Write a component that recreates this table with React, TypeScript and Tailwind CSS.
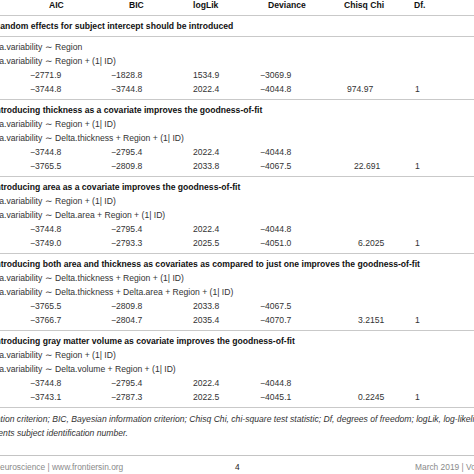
import React from "react";

const cols = "grid grid-cols-[30px_81px_82px_67px_86px_40px_1fr]";

type Num = { aic: string; bic: string; ll: string; dev: string; chi?: string; chiPad?: string; df?: string };
type Block = { title: string; titleMl: string; m1: string; m2: string; r1: Num; r2: Num };

const blocks: Block[] = [
  {
    title: "Introducing thickness as a covariate improves the goodness-of-fit",
    titleMl: "ml-[-7px]",
    m1: "Delta.variability ∼ Region + (1| ID)",
    m2: "Delta.variability ∼ Delta.thickness + Region + (1| ID)",
    r1: { aic: "−3744.8", bic: "−2795.4", ll: "2022.4", dev: "−4044.8" },
    r2: { aic: "−3765.5", bic: "−2809.8", ll: "2033.8", dev: "−4067.5", chi: "22.691", chiPad: "pl-[8px]", df: "1" },
  },
  {
    title: "Introducing area as a covariate improves the goodness-of-fit",
    titleMl: "ml-[-7px]",
    m1: "Delta.variability ∼ Region + (1| ID)",
    m2: "Delta.variability ∼ Delta.area + Region + (1| ID)",
    r1: { aic: "−3744.8", bic: "−2795.4", ll: "2022.4", dev: "−4044.8" },
    r2: { aic: "−3749.0", bic: "−2793.3", ll: "2025.5", dev: "−4051.0", chi: "6.2025", chiPad: "pl-[12px]", df: "1" },
  },
  {
    title: "Introducing both area and thickness as covariates as compared to just one improves the goodness-of-fit",
    titleMl: "ml-[-7px]",
    m1: "Delta.variability ∼ Delta.thickness + Region + (1| ID)",
    m2: "Delta.variability ∼ Delta.thickness + Delta.area + Region + (1| ID)",
    r1: { aic: "−3765.5", bic: "−2809.8", ll: "2033.8", dev: "−4067.5" },
    r2: { aic: "−3766.7", bic: "−2804.7", ll: "2035.4", dev: "−4070.7", chi: "3.2151", chiPad: "pl-[12px]", df: "1" },
  },
  {
    title: "Introducing gray matter volume as covariate improves the goodness-of-fit",
    titleMl: "ml-[-7px]",
    m1: "Delta.variability ∼ Region + (1| ID)",
    m2: "Delta.variability ∼ Delta.volume + Region + (1| ID)",
    r1: { aic: "−3744.8", bic: "−2795.4", ll: "2022.4", dev: "−4044.8" },
    r2: { aic: "−3743.1", bic: "−2787.3", ll: "2022.5", dev: "−4045.1", chi: "0.2245", chiPad: "pl-[12px]", df: "1" },
  },
];

function NumRow({ n }: { n: Num }) {
  return (
    <div className={`${cols} h-[14px] leading-[14px] whitespace-nowrap text-[#333]`}>
      <span />
      <span>{n.aic}</span>
      <span>{n.bic}</span>
      <span>{n.ll}</span>
      <span>{n.dev}</span>
      <span className={n.chiPad ?? ""}>{n.chi ?? ""}</span>
      <span className="pl-[29px]">{n.df ?? ""}</span>
    </div>
  );
}

function ModelRow({ text }: { text: string }) {
  return (
    <div className="h-[14px] leading-[14px] whitespace-nowrap text-[#333]">
      <span className="ml-[-16px]">{text}</span>
    </div>
  );
}

export default function App() {
  return (
    <div
      className="w-[474px] h-[474px] overflow-hidden bg-white text-[8.6px] text-[#222]"
      style={{ fontFamily: '"Liberation Sans", Arial, sans-serif' }}
    >
      {/* header */}
      <div className={`${cols} h-[16px] leading-[10px] font-bold text-[#111] border-b border-[#c9c9c9] whitespace-nowrap`}>
        <span />
        <span className="pl-[19px]">AIC</span>
        <span className="pl-[18px]">BIC</span>
        <span>logLik</span>
        <span className="pl-[8px]">Deviance</span>
        <span className="ml-[-2px]">Chisq Chi</span>
        <span className="pl-[28px]">Df.</span>
      </div>

      {/* first block */}
      <div className="h-[21px] leading-[20px] font-bold text-[#111] border-b border-[#c9c9c9] whitespace-nowrap">
        <span className="ml-[-6px]">Random effects for subject intercept should be introduced</span>
      </div>
      <div className="pt-[3px] pb-[3px] border-b border-[#c9c9c9]">
        <ModelRow text="Delta.variability ∼ Region" />
        <ModelRow text="Delta.variability ∼ Region + (1| ID)" />
        <NumRow n={{ aic: "−2771.9", bic: "−1828.8", ll: "1534.9", dev: "−3069.9" }} />
        <NumRow n={{ aic: "−3744.8", bic: "−3744.8", ll: "2022.4", dev: "−4044.8", chi: "974.97", chiPad: "pl-[1px]", df: "1" }} />
      </div>

      {blocks.map((b, i) => (
        <div key={i} className="pt-[3px] pb-[3px] border-b border-[#c9c9c9]">
          <div className="h-[14px] leading-[14px] font-bold text-[#111] whitespace-nowrap">
            <span className={b.titleMl}>{b.title}</span>
          </div>
          <ModelRow text={b.m1} />
          <ModelRow text={b.m2} />
          <NumRow n={b.r1} />
          <NumRow n={b.r2} />
        </div>
      ))}

      {/* footnote */}
      <div className="pt-[4px] italic text-[#333] whitespace-nowrap">
        <div className="h-[14px] leading-[14px]">
          <span className="ml-[-75px]">
            AIC, Akaike information criterion; BIC, Bayesian information criterion; Chisq Chi, chi-square test statistic; Df, degrees of freedom; logLik, log-likelihood; (1|ID)
          </span>
        </div>
        <div className="h-[14px] leading-[14px]">
          <span className="ml-[-37px]">ID represents subject identification number.</span>
        </div>
      </div>

      {/* footer */}
      <div className="mt-[15px] border-t border-[#c4c4c4] pt-[5px] grid grid-cols-[232px_183px_1fr] text-[8.4px] leading-[12px] whitespace-nowrap">
        <span className="text-[#8a8a8a]">
          <span className="ml-[-6px]">Neuroscience | www.frontiersin.org</span>
        </span>
        <span className="pl-[3px] text-[#222]">4</span>
        <span className="text-[#8a8a8a]">March 2019 | Volume 10 | Article</span>
      </div>
    </div>
  );
}
